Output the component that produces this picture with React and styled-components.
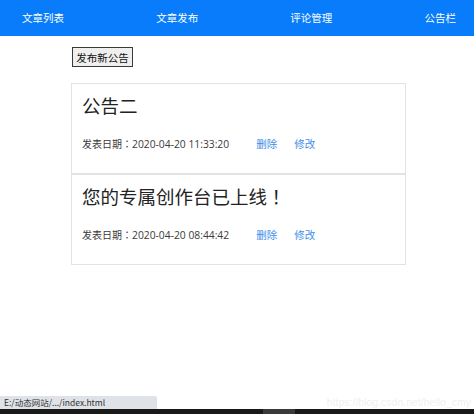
import React from "react";
import styled, { createGlobalStyle } from "styled-components";

const Global = createGlobalStyle`
  html, body { margin: 0; padding: 0; background: #fff; }
  body { font-family: "Open Sans", "Noto Sans CJK SC", sans-serif; color: #333; }
  * { box-sizing: border-box; }
`;

const Page = styled.div`
  width: 474px;
  height: 414px;
  position: relative;
  overflow: hidden;
`;

const NavBar = styled.nav`
  height: 36px;
  background: #087cfa;
  display: flex;
  align-items: center;
  justify-content: space-between;
  padding: 0 18px 0 22px;
`;

const NavItem = styled.a`
  color: #fff;
  font-size: 10.5px;
  line-height: 14px;
  font-family: "Noto Sans CJK SC", sans-serif;
  text-decoration: none;
`;

const Main = styled.main`
  padding: 11px 0 0 71px;
  display: flex;
  flex-direction: column;
  align-items: flex-start;
`;

const PublishButton = styled.button`
  margin-left: 1px;
  height: 20px;
  width: 61px;
  padding: 0;
  font-family: "Noto Sans CJK SC", sans-serif;
  font-size: 10.5px;
  color: #111;
  background: #efefef;
  border: 1px solid #3a3a3a;
  border-radius: 0;
`;

const CardList = styled.div`
  margin-top: 16px;
  width: 335px;
  display: flex;
  flex-direction: column;
`;

const Card = styled.section`
  height: 91px;
  border: 1px solid #e3e3e3;
  padding: 8px 10px;
  background: #fff;
`;

const Title = styled.h2`
  margin: 0;
  font-family: "Noto Sans CJK SC", sans-serif;
  font-weight: 400;
  font-size: 18.5px;
  line-height: 27px;
  color: #222;
`;

const Bang = styled.span`
  font-family: "Noto Sans CJK TC", sans-serif;
`;

const Meta = styled.div`
  margin-top: 17px;
  display: flex;
  align-items: center;
  font-size: 10px;
  line-height: 16px;
  color: #3a3a3a;
`;

const Label = styled.span`
  font-family: "Noto Sans CJK SC", sans-serif;
`;

const Colon = styled.span`
  font-family: "Noto Sans CJK TC", sans-serif;
`;

const DateText = styled.span`
  font-size: 10.3px;
`;

const Action = styled.a`
  margin-left: ${(p) => p.$gap}px;
  color: #3d8ee8;
  font-family: "Noto Sans CJK SC", sans-serif;
  font-size: 10.5px;
  text-decoration: none;
`;

const StatusBubble = styled.div`
  position: absolute;
  left: 0;
  bottom: 5px;
  width: 157px;
  height: 13px;
  background: #dfe2e7;
  border-top-right-radius: 2px;
  padding-left: 4px;
  font-family: "Noto Sans CJK SC", sans-serif;
  font-size: 8.5px;
  line-height: 13px;
  color: #333;
`;

const Watermark = styled.div`
  position: absolute;
  right: 3px;
  bottom: 5px;
  font-family: "Liberation Sans", sans-serif;
  font-size: 10.5px;
  line-height: 14px;
  color: #efefef;
`;

const Taskbar = styled.div`
  position: absolute;
  left: 0;
  right: 0;
  bottom: 0;
  height: 5px;
  background: #191919;
  display: flex;
`;

const TaskSegment = styled.div`
  margin-left: 263px;
  width: 32px;
  background: #3a3a3a;
`;

const notices = [
  { title: "公告二", bang: "", date: "2020-04-20 11:33:20" },
  { title: "您的专属创作台已上线", bang: "！", date: "2020-04-20 08:44:42" },
];

export default function App() {
  return (
    <Page>
      <Global />
      <NavBar>
        <NavItem>文章列表</NavItem>
        <NavItem>文章发布</NavItem>
        <NavItem>评论管理</NavItem>
        <NavItem>公告栏</NavItem>
      </NavBar>
      <Main>
        <PublishButton>发布新公告</PublishButton>
        <CardList>
          {notices.map((n) => (
            <Card key={n.date}>
              <Title>
                {n.title}
                {n.bang && <Bang>{n.bang}</Bang>}
              </Title>
              <Meta>
                <Label>
                  发表日期<Colon>：</Colon>
                </Label>
                <DateText>{n.date}</DateText>
                <Action $gap={27}>删除</Action>
                <Action $gap={17}>修改</Action>
              </Meta>
            </Card>
          ))}
        </CardList>
      </Main>
      <Watermark>https://blog.csdn.net/hello_cmy</Watermark>
      <StatusBubble>E:/动态网站/.../index.html</StatusBubble>
      <Taskbar>
        <TaskSegment />
      </Taskbar>
    </Page>
  );
}
